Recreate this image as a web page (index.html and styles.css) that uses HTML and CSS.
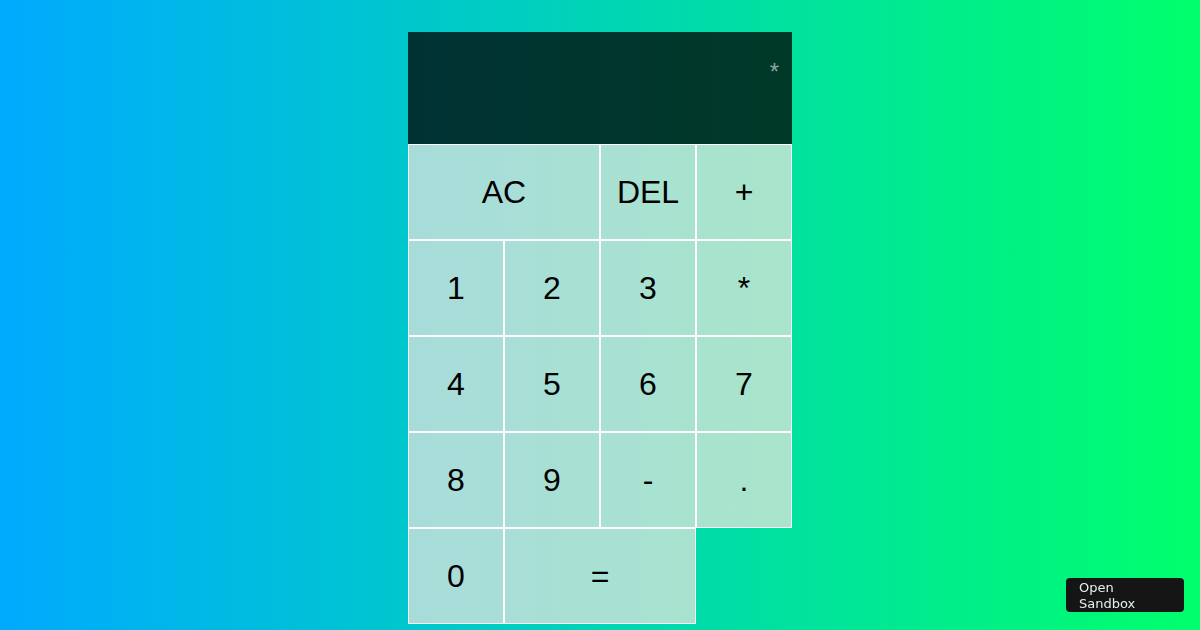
FILE: index.html
```html
<!DOCTYPE html>
<html>
<head>
<meta charset="utf-8">
<link rel="stylesheet" href="styles.css">
</head>
<body>
<div class="calculator-grid">
  <div class="output">
    <div class="previous-operand">*</div>
    <div class="current-operand"></div>
  </div>
  <button class="span-two">AC</button>
  <button>DEL</button>
  <button>+</button>
  <button>1</button>
  <button>2</button>
  <button>3</button>
  <button>*</button>
  <button>4</button>
  <button>5</button>
  <button>6</button>
  <button>7</button>
  <button>8</button>
  <button>9</button>
  <button>-</button>
  <button>.</button>
  <button>0</button>
  <button class="span-two">=</button>
</div>
<a class="sandbox-btn">Open Sandbox</a>
</body>
</html>
```

FILE: styles.css
```css
* { box-sizing: border-box; }
html, body { margin: 0; padding: 0; }
body {
  width: 1200px;
  height: 630px;
  overflow: hidden;
  background: linear-gradient(to right, #00aaff, #00ff6c);
  font-family: "Liberation Sans", Arial, sans-serif;
}
.calculator-grid {
  display: grid;
  justify-content: center;
  padding-top: 32px;
  grid-template-columns: repeat(4, 96px);
  grid-template-rows: 112px repeat(5, 96px);
}
.calculator-grid > button {
  cursor: pointer;
  font-family: "Liberation Sans", Arial, sans-serif;
  font-size: 32px;
  color: #000;
  border: 1px solid #fff;
  outline: none;
  background-color: rgba(255, 230, 226, 0.66);
  padding: 0;
  margin: 0;
}
.span-two { grid-column: span 2; }
.output {
  grid-column: 1 / -1;
  background-color: rgba(0, 0, 0, 0.75);
  display: flex;
  flex-direction: column;
  align-items: flex-end;
  padding: 26px 13px;
}
.previous-operand {
  color: rgba(255, 255, 255, 0.55);
  font-family: "Liberation Sans", Arial, sans-serif;
  font-size: 24px;
  line-height: 28px;
}
.current-operand {
  color: #fff;
  font-size: 40px;
}
.sandbox-btn {
  position: fixed;
  right: 16px;
  bottom: 18px;
  width: 118px;
  height: 34px;
  background: #151515;
  color: #e6eeee;
  border-radius: 4px;
  font-family: "DejaVu Sans", Verdana, sans-serif;
  font-size: 13px;
  line-height: 16px;
  padding: 2px 40px 0 13px;
}
```
